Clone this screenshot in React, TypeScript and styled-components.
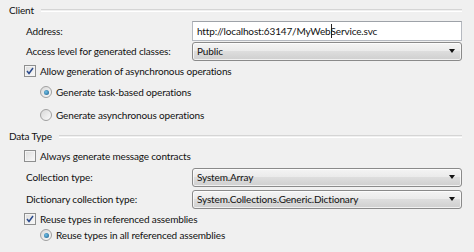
import React from 'react'
import styled, {createGlobalStyle} from 'styled-components'

const GlobalStl = createGlobalStyle`
  html, body {
    margin: 0;
    padding: 0;
    background: #f0f0f0;
  }
  body {
    font-family: Lato, "Liberation Sans", sans-serif;
    font-size: 10px;
    letter-spacing: -0.15px;
    color: #111;
  }
`

const PageStl = styled.div`
  width: 474px;
  height: 252px;
  display: flex;
  flex-direction: column;
  box-sizing: border-box;
  padding-right: 12px;
  white-space: nowrap;
`

const GroupHeaderStl = styled.div`
  height: 20px;
  display: flex;
  align-items: center;
  padding-left: 9px;
  gap: 7px;
`

const GroupLineStl = styled.div`
  flex: 1;
  height: 1px;
  border-top: 1px solid #d5d5d5;
  border-bottom: 1px solid #ffffff;
`

const FieldRowStl = styled.div<{h: number}>`
  height: ${({h}) => h}px;
  display: grid;
  grid-template-columns: 166px 1fr;
  align-items: center;
  padding-left: 26px;
`

const OptionRowStl = styled.div<{h: number; indent: number}>`
  height: ${({h}) => h}px;
  display: flex;
  align-items: center;
  padding-left: ${({indent}) => indent}px;
  gap: 4px;
`

const TextBoxStl = styled.div`
  height: 20px;
  box-sizing: border-box;
  border: 1px solid #b5b9c0;
  border-top-color: #9ea2a8;
  background: #fff;
  display: flex;
  align-items: center;
  padding-left: 4px;
`

const CaretStl = styled.span`
  display: inline-block;
  width: 1px;
  height: 14px;
  background: #222;
  margin-right: -1px;
  vertical-align: middle;
`

const SelectStl = styled.div`
  height: 19px;
  box-sizing: border-box;
  border: 1px solid #8a8a8a;
  border-radius: 3px;
  background: linear-gradient(#f4f4f4 0%, #ebebeb 45%, #dddddd 50%, #cfcfcf 100%);
  display: flex;
  align-items: center;
  justify-content: space-between;
  padding: 0 6px 0 4px;
  box-shadow: inset 0 0 0 1px rgba(255, 255, 255, 0.7);
`

const ArrowStl = styled.span`
  width: 0;
  height: 0;
  border-left: 3px solid transparent;
  border-right: 3px solid transparent;
  border-top: 4px solid #111;
`

const CheckBoxStl = styled.span`
  width: 10px;
  height: 10px;
  border: 1px solid #8e8f8f;
  background: linear-gradient(135deg, #dcdcdc, #fafafa);
  display: flex;
  align-items: center;
  justify-content: center;
  flex-shrink: 0;
  box-shadow: inset 0 0 0 1px #f4f4f4;
`

const RadioStl = styled.span<{checked: boolean}>`
  width: 10px;
  height: 10px;
  border-radius: 50%;
  border: 1px solid #a0a0a0;
  background: linear-gradient(135deg, #d8d8d8, #fbfbfb);
  display: flex;
  align-items: center;
  justify-content: center;
  flex-shrink: 0;
  ${({checked}) => checked && `
    &::after {
      content: '';
      width: 5px;
      height: 5px;
      border-radius: 50%;
      background: radial-gradient(circle at 40% 40%, #6fc0e8, #1a5a86);
    }
  `}
`

const Check = () => (
    <svg width="8" height="8" viewBox="0 0 8 8">
        <path d="M1 4 L3 6.5 L7 1" fill="none" stroke="#2a4a8c" strokeWidth="1.5"/>
    </svg>
)

const CheckOption = ({label, checked, h}: {label: string; checked: boolean; h: number}) => (
    <OptionRowStl h={h} indent={24}>
        <CheckBoxStl>{checked && <Check/>}</CheckBoxStl>
        <span>{label}</span>
    </OptionRowStl>
)

const RadioOption = ({label, checked, h}: {label: string; checked: boolean; h: number}) => (
    <OptionRowStl h={h} indent={40}>
        <RadioStl checked={checked}/>
        <span>{label}</span>
    </OptionRowStl>
)

const Select = ({value}: {value: string}) => (
    <SelectStl>
        <span>{value}</span>
        <ArrowStl/>
    </SelectStl>
)

const GroupHeader = ({title}: {title: string}) => (
    <GroupHeaderStl>
        <span>{title}</span>
        <GroupLineStl/>
    </GroupHeaderStl>
)

export default function App() {
    return (
        <PageStl>
            <GlobalStl/>
            <GroupHeader title="Client"/>
            <FieldRowStl h={21}>
                <span>Address:</span>
                <TextBoxStl>
                    http://localhost:63147/MyWeb<CaretStl/>Service.svc
                </TextBoxStl>
            </FieldRowStl>
            <FieldRowStl h={20}>
                <span>Access level for generated classes:</span>
                <Select value="Public"/>
            </FieldRowStl>
            <CheckOption h={19} checked={true} label="Allow generation of asynchronous operations"/>
            <RadioOption h={24} checked={true} label="Generate task-based operations"/>
            <RadioOption h={22} checked={false} label="Generate asynchronous operations"/>

            <GroupHeader title="Data Type"/>
            <CheckOption h={20} checked={false} label="Always generate message contracts"/>
            <FieldRowStl h={22}>
                <span>Collection type:</span>
                <Select value="System.Array"/>
            </FieldRowStl>
            <FieldRowStl h={22}>
                <span>Dictionary collection type:</span>
                <Select value="System.Collections.Generic.Dictionary"/>
            </FieldRowStl>
            <CheckOption h={18} checked={true} label="Reuse types in referenced assemblies"/>
            <RadioOption h={14} checked={true} label="Reuse types in all referenced assemblies"/>
        </PageStl>
    )
}
